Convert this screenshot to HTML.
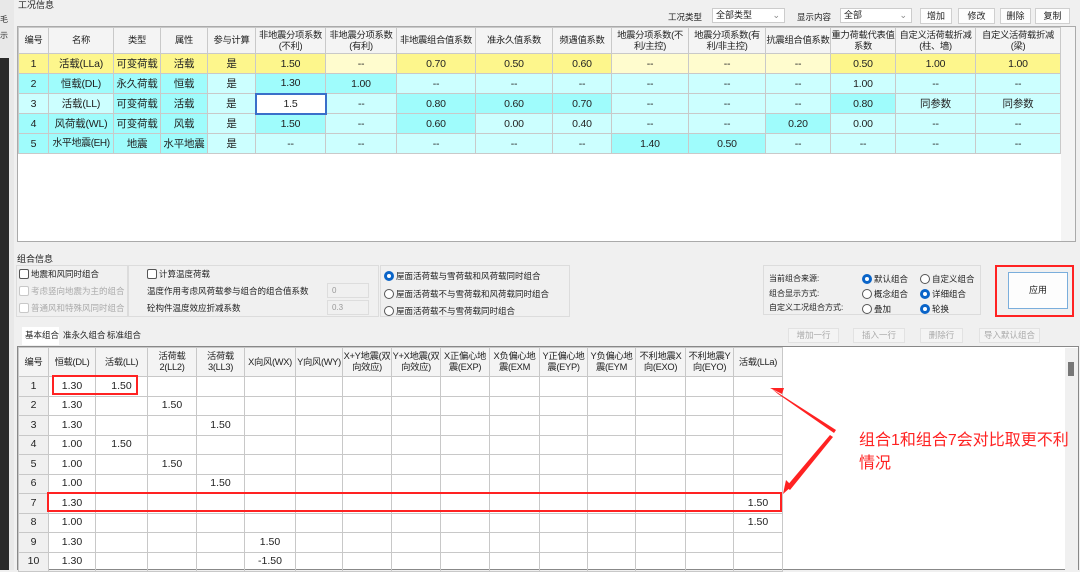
<!DOCTYPE html>
<html><head><meta charset="utf-8"><style>
*{margin:0;padding:0;box-sizing:border-box}
body{width:1080px;height:570px;overflow:hidden;background:#f0f0f0;font-family:"Liberation Sans","Noto Sans CJK SC",sans-serif;font-size:8.5px;color:#222;position:relative}
.a{position:absolute;white-space:nowrap}
table{border-collapse:collapse;position:absolute;table-layout:fixed}
td,th{text-align:center;overflow:hidden;white-space:nowrap;font-weight:normal;padding:0}
#t1 td,#t1 th{border:1px solid #c9c9c9;font-size:10.5px;height:20px;line-height:18px}
#t1 td{letter-spacing:-0.2px}
#t1 th{background:#f4f4f4;font-size:9.3px;line-height:11px;height:26px;white-space:normal;letter-spacing:-0.3px}
.y{background:#fdf68c}.ly{background:#fffcce}.c{background:#ccffff}.d{background:#9ffcfc}
#t2 td,#t2 th{border:1px solid #c8c8c8;font-size:10.5px;height:19.5px;line-height:17px}
#t2 th{background:#f4f4f4;font-size:9.3px;line-height:11px;height:29px;white-space:normal;letter-spacing:-0.3px}
#t2 td.n{background:#f0f0f0}
.btn{position:absolute;background:#fdfdfd;border:1px solid #cfcfcf;text-align:center;font-size:9px;line-height:14px}
.sel{position:absolute;background:#fff;border:1px solid #ccc;font-size:9px;padding-left:3px;line-height:13px}
.box{position:absolute;border:1px solid #dcdcdc}
.cb{display:inline-block;width:10px;height:10px;border:1px solid #555;background:#fff;vertical-align:-2px;margin-right:2px;border-radius:2px}
.cb.g{border-color:#c8c8c8}
.rd{display:inline-block;width:10px;height:10px;border:1px solid #555;border-radius:50%;background:#fff;vertical-align:-2px;margin-right:2px}
.rd.on{border:3px solid #0a64c8}
.gb{position:absolute;background:#f4f4f4;border:1px solid #e2e2e2;color:#aaa;text-align:center;font-size:8.5px;line-height:13px}
.red{position:absolute;border:2px solid #f22}
</style></head><body>
<div class="a" style="left:0;top:0;width:14px;height:570px;background:#e8e8e8"></div>
<div class="a" style="left:0;top:58px;width:9px;height:512px;background:#2a2a2a"></div>
<div class="a" style="left:0;top:14px;font-size:8px;color:#333">毛</div>
<div class="a" style="left:0;top:30px;font-size:8px;color:#333">示</div>

<div class="a" style="left:18px;top:-2px;font-size:9px">工况信息</div>
<div class="a" style="left:668px;top:11px">工况类型</div>
<div class="sel" style="left:712px;top:8px;width:73px">全部类型<span style="float:right;margin-right:4px;color:#888">⌄</span></div>
<div class="a" style="left:797px;top:11px">显示内容</div>
<div class="sel" style="left:840px;top:8px;width:72px">全部<span style="float:right;margin-right:4px;color:#888">⌄</span></div>
<div class="btn" style="left:920px;top:8px;width:32px">增加</div>
<div class="btn" style="left:958px;top:8px;width:37px">修改</div>
<div class="btn" style="left:1000px;top:8px;width:31px">删除</div>
<div class="btn" style="left:1035px;top:8px;width:35px">复制</div>

<div class="a" style="left:17px;top:26px;width:1059px;height:216px;background:#fff;border:1px solid #aaa"></div>
<table id="t1" style="left:18px;top:27px;width:1042px">
<colgroup><col style="width:30px"><col style="width:65px"><col style="width:47px"><col style="width:47px"><col style="width:48px"><col style="width:70px"><col style="width:71px"><col style="width:79px"><col style="width:77px"><col style="width:59px"><col style="width:77px"><col style="width:77px"><col style="width:65px"><col style="width:65px"><col style="width:80px"><col style="width:85px"></colgroup>
<tr><th>编号</th><th>名称</th><th>类型</th><th>属性</th><th>参与计算</th><th>非地震分项系数(不利)</th><th>非地震分项系数(有利)</th><th>非地震组合值系数</th><th>准永久值系数</th><th>频遇值系数</th><th>地震分项系数(不利/主控)</th><th>地震分项系数(有利/非主控)</th><th>抗震组合值系数</th><th>重力荷载代表值系数</th><th>自定义活荷载折减(柱、墙)</th><th>自定义活荷载折减(梁)</th></tr>
<tr class="y"><td>1</td><td>活载(LLa)</td><td>可变荷载</td><td>活载</td><td>是</td><td>1.50</td><td class="ly">--</td><td>0.70</td><td>0.50</td><td>0.60</td><td class="ly">--</td><td class="ly">--</td><td class="ly">--</td><td>0.50</td><td>1.00</td><td>1.00</td></tr>
<tr class="c"><td class="d">2</td><td class="d">恒载(DL)</td><td class="d">永久荷载</td><td class="d">恒载</td><td>是</td><td class="d">1.30</td><td class="d">1.00</td><td>--</td><td>--</td><td>--</td><td>--</td><td>--</td><td>--</td><td>1.00</td><td>--</td><td>--</td></tr>
<tr class="c"><td>3</td><td>活载(LL)</td><td class="d">可变荷载</td><td class="d">活载</td><td>是</td><td style="background:#fff;border:2px solid #3a6fc9">1.5</td><td>--</td><td class="d">0.80</td><td class="d">0.60</td><td class="d">0.70</td><td>--</td><td>--</td><td>--</td><td class="d">0.80</td><td>同参数</td><td>同参数</td></tr>
<tr class="c"><td class="d">4</td><td class="d">风荷载(WL)</td><td class="d">可变荷载</td><td class="d">风载</td><td>是</td><td class="d">1.50</td><td>--</td><td class="d">0.60</td><td>0.00</td><td>0.40</td><td>--</td><td>--</td><td class="d">0.20</td><td>0.00</td><td>--</td><td>--</td></tr>
<tr class="c"><td class="d">5</td><td class="d" style="font-size:10px;letter-spacing:-0.4px">水平地震(EH)</td><td class="d">地震</td><td class="d">水平地震</td><td>是</td><td>--</td><td>--</td><td>--</td><td>--</td><td>--</td><td class="d">1.40</td><td class="d">0.50</td><td>--</td><td>--</td><td>--</td><td>--</td></tr>
</table>
<div class="a" style="left:1061px;top:27px;width:14px;height:214px;background:#f4f4f4"></div>

<div class="a" style="left:17px;top:252px;font-size:9px">组合信息</div>
<div class="box" style="left:16px;top:265px;width:112px;height:52px"></div>
<div class="a" style="left:19px;top:268px"><span class="cb"></span>地震和风同时组合</div>
<div class="a" style="left:19px;top:285px;color:#aaa"><span class="cb g"></span>考虑竖向地震为主的组合</div>
<div class="a" style="left:19px;top:302px;color:#aaa"><span class="cb g"></span>普通风和特殊风同时组合</div>
<div class="box" style="left:128px;top:265px;width:251px;height:52px"></div>
<div class="a" style="left:147px;top:268px"><span class="cb"></span>计算温度荷载</div>
<div class="a" style="left:147px;top:285px">温度作用考虑风荷载参与组合的组合值系数</div>
<div class="a" style="left:147px;top:302px">砼构件温度效应折减系数</div>
<div class="a" style="left:327px;top:283px;width:42px;height:15px;border:1px solid #ddd;color:#999;padding-left:4px;font-size:8px;line-height:13px">0</div>
<div class="a" style="left:327px;top:300px;width:42px;height:15px;border:1px solid #ddd;color:#999;padding-left:4px;font-size:8px;line-height:13px">0.3</div>
<div class="box" style="left:380px;top:265px;width:190px;height:52px"></div>
<div class="a" style="left:384px;top:270px"><span class="rd on"></span>屋面活荷载与雪荷载和风荷载同时组合</div>
<div class="a" style="left:384px;top:288px"><span class="rd"></span>屋面活荷载不与雪荷载和风荷载同时组合</div>
<div class="a" style="left:384px;top:305px"><span class="rd"></span>屋面活荷载不与雪荷载同时组合</div>

<div class="box" style="left:763px;top:265px;width:218px;height:50px"></div>
<div class="a" style="left:769px;top:273px;font-size:8px">当前组合来源:</div>
<div class="a" style="left:769px;top:288px;font-size:8px">组合显示方式:</div>
<div class="a" style="left:769px;top:302px;font-size:8px">自定义工况组合方式:</div>
<div class="a" style="left:862px;top:273px"><span class="rd on"></span>默认组合</div>
<div class="a" style="left:920px;top:273px"><span class="rd"></span>自定义组合</div>
<div class="a" style="left:862px;top:288px"><span class="rd"></span>概念组合</div>
<div class="a" style="left:920px;top:288px"><span class="rd on"></span>详细组合</div>
<div class="a" style="left:862px;top:303px"><span class="rd"></span>叠加</div>
<div class="a" style="left:920px;top:303px"><span class="rd on"></span>轮换</div>
<div class="btn" style="left:1008px;top:272px;width:60px;height:37px;line-height:35px;border-color:#7aaedc">应用</div>
<div class="red" style="left:995px;top:265px;width:79px;height:52px"></div>

<div class="a" style="left:22px;top:327px;width:37px;height:18px;background:#fff"></div>
<div class="a" style="left:25px;top:329px">基本组合</div>
<div class="a" style="left:63px;top:329px">准永久组合</div>
<div class="a" style="left:107px;top:329px">标准组合</div>
<div class="gb" style="left:788px;top:328px;width:51px">增加一行</div>
<div class="gb" style="left:853px;top:328px;width:52px">插入一行</div>
<div class="gb" style="left:920px;top:328px;width:43px">删除行</div>
<div class="gb" style="left:979px;top:328px;width:61px">导入默认组合</div>

<div class="a" style="left:17px;top:346px;width:1062px;height:224px;background:#fff;border:1px solid #888"></div>
<table id="t2" style="left:18px;top:347px;width:764px">
<colgroup><col style="width:30px"><col style="width:47px"><col style="width:52px"><col style="width:49px"><col style="width:48px"><col style="width:51px"><col style="width:47px"><col style="width:49px"><col style="width:49px"><col style="width:49px"><col style="width:50px"><col style="width:48px"><col style="width:48px"><col style="width:50px"><col style="width:48px"><col style="width:49px"></colgroup>
<tr><th>编号</th><th>恒载(DL)</th><th>活载(LL)</th><th>活荷载2(LL2)</th><th>活荷载3(LL3)</th><th>X向风(WX)</th><th>Y向风(WY)</th><th>X+Y地震(双向效应)</th><th>Y+X地震(双向效应)</th><th>X正偏心地震(EXP)</th><th>X负偏心地震(EXM</th><th>Y正偏心地震(EYP)</th><th>Y负偏心地震(EYM</th><th>不利地震X向(EXO)</th><th>不利地震Y向(EYO)</th><th>活载(LLa)</th></tr>
<tr><td class="n">1</td><td>1.30</td><td>1.50</td><td></td><td></td><td></td><td></td><td></td><td></td><td></td><td></td><td></td><td></td><td></td><td></td><td></td></tr>
<tr><td class="n">2</td><td>1.30</td><td></td><td>1.50</td><td></td><td></td><td></td><td></td><td></td><td></td><td></td><td></td><td></td><td></td><td></td><td></td></tr>
<tr><td class="n">3</td><td>1.30</td><td></td><td></td><td>1.50</td><td></td><td></td><td></td><td></td><td></td><td></td><td></td><td></td><td></td><td></td><td></td></tr>
<tr><td class="n">4</td><td>1.00</td><td>1.50</td><td></td><td></td><td></td><td></td><td></td><td></td><td></td><td></td><td></td><td></td><td></td><td></td><td></td></tr>
<tr><td class="n">5</td><td>1.00</td><td></td><td>1.50</td><td></td><td></td><td></td><td></td><td></td><td></td><td></td><td></td><td></td><td></td><td></td><td></td></tr>
<tr><td class="n">6</td><td>1.00</td><td></td><td></td><td>1.50</td><td></td><td></td><td></td><td></td><td></td><td></td><td></td><td></td><td></td><td></td><td></td></tr>
<tr><td class="n">7</td><td>1.30</td><td></td><td></td><td></td><td></td><td></td><td></td><td></td><td></td><td></td><td></td><td></td><td></td><td></td><td>1.50</td></tr>
<tr><td class="n">8</td><td>1.00</td><td></td><td></td><td></td><td></td><td></td><td></td><td></td><td></td><td></td><td></td><td></td><td></td><td></td><td>1.50</td></tr>
<tr><td class="n">9</td><td>1.30</td><td></td><td></td><td></td><td>1.50</td><td></td><td></td><td></td><td></td><td></td><td></td><td></td><td></td><td></td><td></td></tr>
<tr><td class="n">10</td><td>1.30</td><td></td><td></td><td></td><td>-1.50</td><td></td><td></td><td></td><td></td><td></td><td></td><td></td><td></td><td></td><td></td></tr>
</table>
<div class="a" style="left:1065px;top:348px;width:13px;height:222px;background:#f0f0f0"></div>
<div class="a" style="left:1068px;top:362px;width:6px;height:14px;background:#777"></div>

<div class="red" style="left:52px;top:375px;width:86px;height:20px"></div>
<div class="red" style="left:47px;top:492px;width:735px;height:20px"></div>
<svg class="a" style="left:0;top:0" width="1080" height="570">
<polygon points="770,388 784,388 782,394" fill="#f22"/>
<polygon points="772,389 836,430 834,433 778,394" fill="#f22"/>
<polygon points="783,494 786,480 792,486" fill="#f22"/>
<polygon points="786,487 830,435 833,437 790,490" fill="#f22"/>
</svg>
<div class="a" style="left:859px;top:429px;font-size:16px;color:#f22;line-height:23px">组合1和组合7会对比取更不利<br>情况</div>
</body></html>
